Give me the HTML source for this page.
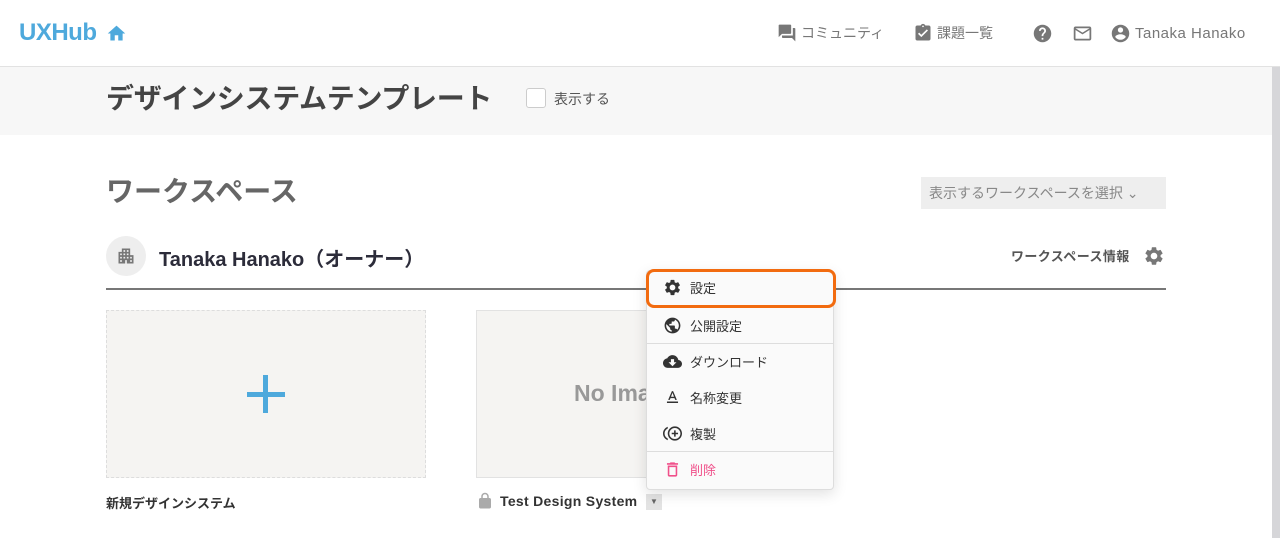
<!DOCTYPE html>
<html><head><meta charset="utf-8"><style>
*{box-sizing:border-box;margin:0;padding:0}
body{width:1280px;height:538px;overflow:hidden;background:#fff;font-family:"Liberation Sans","Noto Sans CJK JP",sans-serif;position:relative;color:#333}
.a{position:absolute}
svg{display:block}
.hdr{left:0;top:0;width:1280px;height:67px;border-bottom:1px solid #e2e2e2;background:#fff}
.nav{font-size:14px;color:#777;display:flex;align-items:center;gap:4px}
.mi{display:flex;align-items:center;gap:8px;height:36px;padding:0 16px;font-size:13px;color:#333}
.sep{border-top:1px solid #ddd}
</style></head><body>
<div class="a hdr"></div>
<div class="a" style="left:19px;top:19px;font-size:24px;font-weight:bold;color:#4ea9dc;letter-spacing:-0.5px">UXHub</div>
<svg class="a" style="left:106px;top:23px" width="21" height="21" viewBox="0 0 24 24"><path fill="#4ea9dc" d="M10 20v-6h4v6h5v-8h3L12 3 2 12h3v8z"/></svg>

<div class="a nav" style="left:777px;top:23px"><svg width="20" height="20" viewBox="0 0 24 24"><path fill="#777" d="M21 6h-2v9H6v2c0 .55.45 1 1 1h11l4 4V7c0-.55-.45-1-1-1zm-4 6V3c0-.55-.45-1-1-1H3c-.55 0-1 .45-1 1v14l4-4h10c.55 0 1-.45 1-1z"/></svg>コミュニティ</div>
<div class="a nav" style="left:913px;top:23px"><svg width="20" height="20" viewBox="0 0 24 24"><path fill="#777" d="M19 3h-4.18C14.4 1.84 13.3 1 12 1s-2.4.84-2.82 2H5c-1.1 0-2 .9-2 2v14c0 1.1.9 2 2 2h14c1.1 0 2-.9 2-2V5c0-1.1-.9-2-2-2zm-7 0c.55 0 1 .45 1 1s-.45 1-1 1-1-.45-1-1 .45-1 1-1zm-2 14l-4-4 1.41-1.41L10 14.17l6.59-6.59L18 9l-8 8z"/></svg>課題一覧</div>
<svg class="a" style="left:1032px;top:23px" width="21" height="21" viewBox="0 0 24 24"><path fill="#777" d="M12 2C6.48 2 2 6.48 2 12s4.48 10 10 10 10-4.48 10-10S17.52 2 12 2zm1 17h-2v-2h2v2zm2.07-7.75l-.9.92C13.45 12.9 13 13.5 13 15h-2v-.5c0-1.1.45-2.1 1.170-2.83l1.24-1.26c.37-.36.59-.86.59-1.41 0-1.1-.9-2-2-2s-2 .9-2 2H8c0-2.21 1.79-4 4-4s4 1.79 4 4c0 .88-.36 1.68-.93 2.25z"/></svg>
<svg class="a" style="left:1072px;top:23px" width="21" height="21" viewBox="0 0 24 24"><path fill="#777" d="M22 6c0-1.1-.9-2-2-2H4c-1.1 0-2 .9-2 2v12c0 1.1.9 2 2 2h16c1.1 0 2-.9 2-2V6zm-2 0l-8 5-8-5h16zm0 12H4V8l8 5 8-5v10z"/></svg>
<div class="a nav" style="left:1110px;top:23px;font-size:15px;color:#777;letter-spacing:0.5px"><svg width="21" height="21" viewBox="0 0 24 24"><path fill="#777" d="M12 2C6.48 2 2 6.48 2 12s4.48 10 10 10 10-4.48 10-10S17.52 2 12 2zm0 3c1.66 0 3 1.340 3 3s-1.34 3-3 3-3-1.34-3-3 1.34-3 3-3zm0 14.2c-2.5 0-4.71-1.28-6-3.22.03-1.99 4-3.08 6-3.08 1.99 0 5.97 1.09 6 3.08-1.29 1.94-3.5 3.22-6 3.22z"/></svg>Tanaka Hanako</div>

<div class="a" style="left:0;top:67px;width:1272px;height:68px;background:#f7f7f7"></div>
<div class="a" style="left:1272px;top:67px;width:8px;height:471px;background:#d6d6d9"></div>
<div class="a" style="left:106px;top:80px;font-size:28px;font-weight:bold;color:#444;line-height:38px;letter-spacing:-0.3px">デザインシステムテンプレート</div>
<div class="a" style="left:526px;top:88px;width:20px;height:20px;border:1px solid #ccc;border-radius:3px;background:#fff"></div>
<div class="a" style="left:554px;top:89px;font-size:14px;color:#555">表示する</div>

<div class="a" style="left:106px;top:173px;font-size:28px;font-weight:bold;color:#666;line-height:38px">ワークスペース</div>
<div class="a" style="left:921px;top:177px;width:245px;height:32px;background:#eee;font-size:14px;color:#888;line-height:32px;padding-left:8px">表示するワークスペースを選択 ⌄</div>

<div class="a" style="left:106px;top:236px;width:40px;height:40px;border-radius:50%;background:#eee"></div>
<svg class="a" style="left:116px;top:246px" width="20" height="20" viewBox="0 0 24 24"><path fill="#777" d="M17 11V3H7v4H3v14h8v-4h2v4h8V11h-4zM7 19H5v-2h2v2zm0-4H5v-2h2v2zm0-4H5V9h2v2zm4 4H9v-2h2v2zm0-4H9V9h2v2zm0-4H9V5h2v2zm4 8h-2v-2h2v2zm0-4h-2V9h2v2zm0-4h-2V5h2v2zm4 12h-2v-2h2v2zm0-4h-2v-2h2v2z"/></svg>
<div class="a" style="left:159px;top:243px;font-size:20px;font-weight:bold;color:#2c2c3a">Tanaka Hanako（オーナー）</div>
<div class="a" style="left:1011px;top:246px;font-size:13px;font-weight:bold;color:#555;letter-spacing:0.4px">ワークスペース情報</div>
<svg class="a" style="left:1143px;top:245px" width="22" height="22" viewBox="0 0 24 24"><path fill="#777" d="M19.14 12.94c.04-.3.06-.61.06-.94 0-.32-.02-.64-.07-.94l2.03-1.58a.49.49 0 00.12-.61l-1.92-3.32a.488.488 0 00-.59-.22l-2.39.96c-.5-.38-1.03-.7-1.62-.94l-.36-2.54a.484.484 0 00-.48-.41h-3.84c-.24 0-.43.17-.47.41l-.36 2.54c-.59.24-1.13.57-1.62.94l-2.390-.96c-.22-.08-.47 0-.59.22L2.74 8.87c-.12.21-.08.47.12.61l2.03 1.58c-.05.3-.09.63-.09.94s.02.64.07.94l-2.03 1.58a.49.49 0 00-.12.61l1.92 3.32c.12.22.37.29.59.22l2.39-.96c.5.38 1.03.7 1.62.94l.36 2.54c.05.24.24.41.48.41h3.84c.24 0 .44-.17.47-.41l.36-2.54c.59-.24 1.13-.56 1.62-.94l2.39.96c.22.08.47 0 .59-.22l1.92-3.32c.12-.22.07-.47-.12-.61l-2.01-1.58zM12 15.6c-1.98 0-3.6-1.62-3.6-3.6s1.62-3.6 3.6-3.6 3.6 1.62 3.6 3.6-1.62 3.6-3.6 3.6z"/></svg>
<div class="a" style="left:106px;top:288px;width:1060px;height:2px;background:#777"></div>

<div class="a" style="left:106px;top:310px;width:320px;height:168px;background:#f5f4f2;border:1px dashed #ddd"></div>
<div class="a" style="left:247px;top:392px;width:38px;height:5px;background:#4ea9dc"></div>
<div class="a" style="left:263px;top:375px;width:5px;height:38px;background:#4ea9dc"></div>
<div class="a" style="left:106px;top:493px;font-size:13px;font-weight:bold;color:#333">新規デザインシステム</div>

<div class="a" style="left:476px;top:310px;width:320px;height:168px;background:#f5f4f2;border:1px solid #e2e2e2"></div>
<div class="a" style="left:574px;top:380px;font-size:23px;font-weight:bold;color:#999">No Image</div>
<svg class="a" style="left:476px;top:492px" width="18" height="18" viewBox="0 0 24 24"><path fill="#aaa" d="M18 8h-1V6c0-2.76-2.24-5-5-5S7 3.24 7 6v2H6c-1.1 0-2 .9-2 2v10c0 1.1.9 2 2 2h12c1.1 0 2-.9 2-2V10c0-1.1-.9-2-2-2zM9 6c0-1.66 1.34-3 3-3s3 1.34 3 3v2H9V6z"/></svg>
<div class="a" style="left:500px;top:493px;font-size:14px;font-weight:bold;color:#333;letter-spacing:0.3px">Test Design System</div>
<div class="a" style="left:646px;top:494px;width:16px;height:16px;background:#e3e3e3;font-size:8px;color:#666;text-align:center;line-height:16px">▼</div>

<div class="a" style="left:646px;top:270px;width:188px;height:220px;background:#fafafa;border:1px solid #ddd;border-radius:4px;box-shadow:0 4px 14px rgba(0,0,0,.12);padding-top:0">
<div class="mi" style="margin-top:-2px;margin-bottom:2px"><svg width="19" height="19" viewBox="0 0 24 24"><path fill="#333" d="M19.14 12.94c.04-.3.06-.61.06-.94 0-.32-.02-.64-.07-.94l2.03-1.58a.49.49 0 00.12-.61l-1.92-3.32a.488.488 0 00-.59-.22l-2.39.96c-.5-.38-1.03-.7-1.62-.94l-.36-2.54a.484.484 0 00-.48-.41h-3.84c-.24 0-.43.17-.47.41l-.36 2.54c-.59.24-1.13.57-1.62.94l-2.39-.96c-.22-.08-.47 0-.59.22L2.74 8.87c-.12.21-.08.47.12.61l2.03 1.58c-.05.3-.09.63-.09.94s.02.64.07.94l-2.03 1.58a.49.49 0 00-.12.61l1.92 3.32c.12.22.37.29.59.22l2.39-.96c.5.38 1.03.7 1.62.94l.36 2.54c.05.24.24.41.48.41h3.84c.24 0 .44-.17.47-.41l.36-2.54c.59-.24 1.13-.56 1.62-.94l2.39.96c.22.08.47 0 .59-.22l1.92-3.32c.12-.22.07-.47-.12-.61l-2.01-1.58zM12 15.6c-1.98 0-3.6-1.62-3.6-3.6s1.62-3.6 3.6-3.6 3.6 1.62 3.6 3.6-1.62 3.6-3.6 3.6z"/></svg>設定</div>
<div class="mi"><svg width="19" height="19" viewBox="0 0 24 24"><path fill="#333" d="M12 2C6.48 2 2 6.48 2 12s4.48 10 10 10 10-4.48 10-10S17.52 2 12 2zm-1 17.93c-3.95-.49-7-3.85-7-7.93 0-.62.08-1.21.21-1.79L9 15v1c0 1.1.9 2 2 2v1.93zm6.9-2.54c-.26-.81-1-1.39-1.9-1.39h-1v-3c0-.55-.45-1-1-1H8v-2h2c.55 0 1-.45 1-1V7h2c1.1 0 2-.9 2-2v-.41c2.93 1.19 5 4.06 5 7.41 0 2.08-.8 3.97-2.1 5.39z"/></svg>公開設定</div>
<div class="mi sep"><svg width="19" height="19" viewBox="0 0 24 24"><path fill="#333" d="M19.35 10.04C18.67 6.59 15.64 4 12 4 9.11 4 6.6 5.64 5.35 8.04 2.34 8.36 0 10.91 0 14c0 3.31 2.69 6 6 6h13c2.76 0 5-2.24 5-5 0-2.64-2.05-4.78-4.65-4.96zM17 13l-5 5-5-5h3V9h4v4h3z"/></svg>ダウンロード</div>
<div class="mi"><svg width="19" height="19" viewBox="0 0 24 24"><path fill="#333" d="M5 17v2h14v-2H5zm4.5-4.2h5l.9 2.2h2.1L12.75 4h-1.5L6.5 15h2.1l.9-2.2zM12 5.98L13.87 11h-3.74L12 5.98z"/></svg>名称変更</div>
<div class="mi"><svg width="19" height="19" viewBox="0 0 24 24"><path fill="#333" d="M16 8h-2v3h-3v2h3v3h2v-3h3v-2h-3zM2 12c0-2.79 1.64-5.2 4.01-6.32V3.52C2.52 4.76 0 8.09 0 12s2.52 7.240 6.01 8.48v-2.16C3.64 17.2 2 14.79 2 12zm13-9c-4.96 0-9 4.04-9 9s4.04 9 9 9 9-4.04 9-9-4.04-9-9-9zm0 16c-3.86 0-7-3.14-7-7s3.14-7 7-7 7 3.14 7 7-3.14 7-7 7z"/></svg>複製</div>
<div class="mi sep" style="color:#f0508a"><svg width="19" height="19" viewBox="0 0 24 24"><path fill="#f0508a" d="M16 9v10H8V9h8m-1.5-6h-5l-1 1H5v2h14V4h-3.5l-1-1zM18 7H6v12c0 1.1.9 2 2 2h8c1.1 0 2-.9 2-2V7z"/></svg>削除</div>
</div>
<div class="a" style="left:646px;top:269px;width:190px;height:39px;border:3px solid #f26b0f;border-radius:8px"></div>
</body></html>
